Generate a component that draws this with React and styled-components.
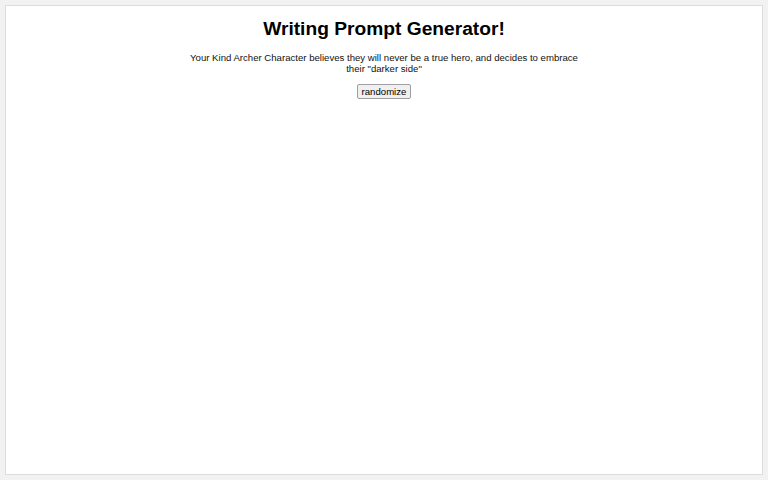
import React, { useState } from "react";
import styled, { createGlobalStyle } from "styled-components";

const GlobalStyle = createGlobalStyle`
  html, body {
    margin: 0;
    padding: 0;
    height: 100%;
    background: #f2f2f2;
    font-family: "Liberation Sans", Arial, sans-serif;
  }
  #root {
    height: 100%;
  }
`;

const Page = styled.div`
  box-sizing: border-box;
  height: 100%;
  padding: 5px;
`;

const Card = styled.main`
  box-sizing: border-box;
  height: 100%;
  background: #fff;
  border: 1px solid #dcdcdc;
  display: flex;
  flex-direction: column;
  align-items: center;
  padding-top: 12px;
`;

const Title = styled.h1`
  margin: 0;
  font-size: 19.2px;
  line-height: 22px;
  font-weight: bold;
  color: #000;
`;

const Prompt = styled.p`
  margin: 12px 0 0;
  max-width: 392px;
  text-align: center;
  font-size: 9.6px;
  line-height: 11px;
  color: #111;
`;

const RandomButton = styled.button`
  margin-top: 10px;
  font-family: "Liberation Sans", Arial, sans-serif;
  font-size: 9.6px;
  line-height: 11px;
  padding: 1px 4px;
  background: #f0f0f0;
  border: 1px solid #a0a0a0;
  border-radius: 2px;
  color: #000;
`;

const prompts = [
  'Your Kind Archer Character believes they will never be a true hero, and decides to embrace their "darker side"',
];

const App = () => {
  const [index, setIndex] = useState(0);

  return (
    <>
      <GlobalStyle />
      <Page>
        <Card>
          <Title>Writing Prompt Generator!</Title>
          <Prompt>{prompts[index]}</Prompt>
          <RandomButton onClick={() => setIndex((index + 1) % prompts.length)}>
            randomize
          </RandomButton>
        </Card>
      </Page>
    </>
  );
};

export default App;
